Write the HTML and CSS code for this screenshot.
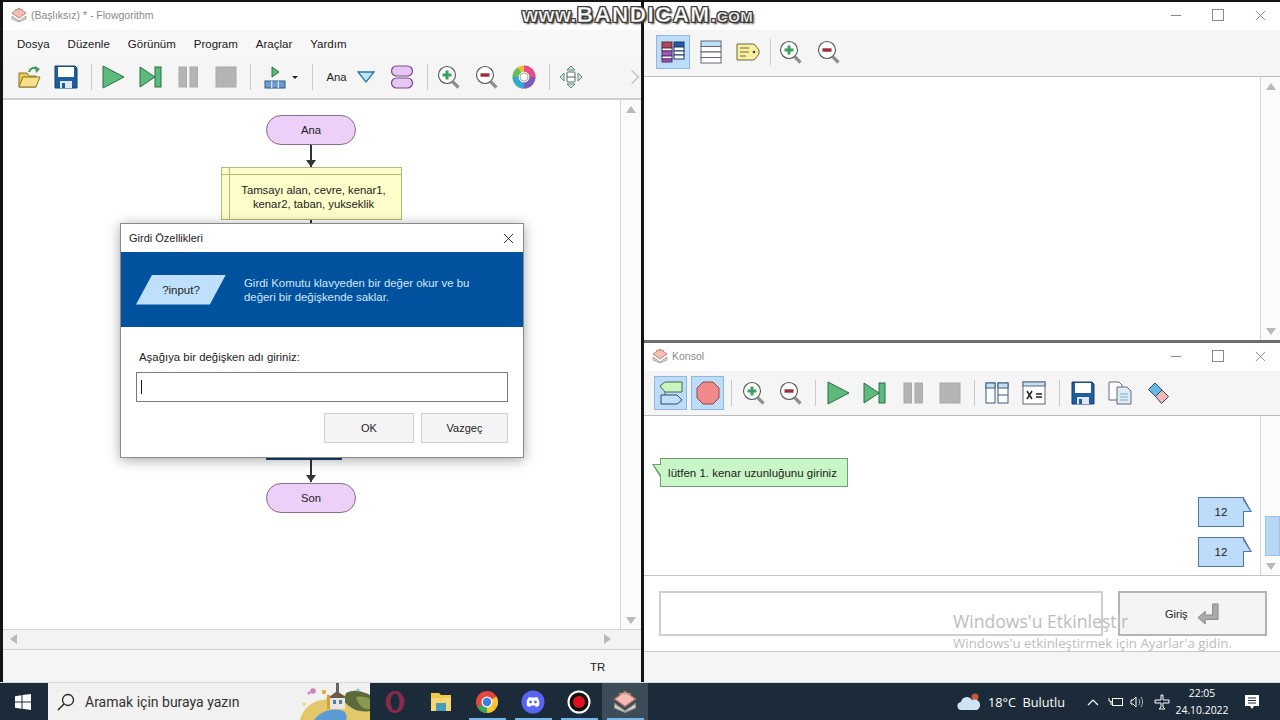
FILE: index.html
```html
<!DOCTYPE html>
<html lang="tr">
<head>
<meta charset="utf-8">
<title>Flowgorithm</title>
<link rel="stylesheet" href="styles.css">
</head>
<body>
<svg class="defs" width="0" height="0">
  <defs>
    <symbol id="logo" viewBox="0 0 16 16"><path d="M8 1l7 5-7 5-7-5z" fill="#f5bdb5" stroke="#b87068" stroke-width=".8"/><path d="M1 9l7 5 7-5v3l-7 3-7-3z" fill="#ddd6c8" stroke="#94948a" stroke-width=".7"/><path d="M4 2.500h8" stroke="#c8a080" stroke-width=".8"/></symbol>
    <symbol id="open" viewBox="0 0 24 24"><path d="M2 8h8l2 3h7v11H2z" fill="#e8c75a" stroke="#8a7320"/><path d="M2 22l4-10h17l-4 10z" fill="#f6e08a" stroke="#8a7320"/><path d="M12 7c1-4 5-5 8-3" fill="none" stroke="#4a9a60" stroke-width="2.200"/><path d="M18 1l5 3-4 4z" fill="#4a9a60"/></symbol>
    <symbol id="save" viewBox="0 0 24 24"><path d="M1 1h20l2 2v20H1z" fill="#1d5f9e" stroke="#123f6e"/><rect x="4" y="2" width="16" height="10" fill="#fff"/><rect x="6" y="16" width="12" height="7" fill="#dfe8f2"/><rect x="8" y="18" width="3" height="5" fill="#1d5f9e"/></symbol>
    <symbol id="play" viewBox="0 0 24 24"><path d="M2 1l21 11L2 23z" fill="#5dba7d" stroke="#2c6e47"/></symbol>
    <symbol id="step" viewBox="0 0 24 24"><path d="M1 2l15 10L1 22z" fill="#5dba7d" stroke="#2c6e47"/><rect x="16" y="2" width="6" height="20" fill="#5dba7d" stroke="#2c6e47"/></symbol>
    <symbol id="pause" viewBox="0 0 24 24"><rect x="3" y="2" width="7.500" height="20" fill="#b4b4b4" stroke="#aaa"/><rect x="14" y="2" width="7.500" height="20" fill="#b4b4b4" stroke="#aaa"/></symbol>
    <symbol id="stop" viewBox="0 0 24 24"><rect x="2" y="2" width="20" height="20" fill="#b4b4b4" stroke="#aaa"/></symbol>
    <symbol id="flow" viewBox="0 0 24 24"><path d="M9 2l7 5-7 5z" fill="#5dba7d" stroke="#2c6e47"/><rect x="2" y="16" width="20" height="7" fill="#6a9cd0" stroke="#2a5a8a"/><path d="M8.700 16v7M15.300 16v7" stroke="#cfe3f5" stroke-width="1.300"/></symbol>
    <symbol id="down" viewBox="0 0 18 12"><path d="M1 1h16l-8 10z" fill="#bfe3f5" stroke="#2a7a9a" stroke-width="1.300"/></symbol>
    <symbol id="stack" viewBox="0 0 24 24"><rect x="1.500" y="1" width="21" height="10" rx="5" fill="#e6c6f2" stroke="#7a4a8a" stroke-width="1.200"/><rect x="1.500" y="13" width="21" height="10" rx="5" fill="#e6c6f2" stroke="#7a4a8a" stroke-width="1.200"/></symbol>
    <symbol id="zin" viewBox="0 0 24 24"><circle cx="10" cy="10" r="8.500" fill="#fff" stroke="#4a5a50" stroke-width="1.100"/><path d="M15.500 16.500l6 6" stroke="#8f8f8f" stroke-width="3.200"/><path d="M10 5.500v9M5.500 10h9" stroke="#3aa060" stroke-width="3"/></symbol>
    <symbol id="zout" viewBox="0 0 24 24"><circle cx="10" cy="10" r="8.500" fill="#fff" stroke="#4a5a50" stroke-width="1.100"/><path d="M15.500 16.500l6 6" stroke="#8f8f8f" stroke-width="3.200"/><path d="M5.500 10h9" stroke="#a02a3a" stroke-width="3.400"/></symbol>
    <symbol id="color" viewBox="0 0 24 24"><circle cx="12" cy="12" r="8.500" fill="none" stroke="#e8c030" stroke-width="6"/><path d="M12 3.500a8.500 8.500 0 0 1 8.500 8.500" fill="none" stroke="#e84a8a" stroke-width="6"/><path d="M20.500 12a8.500 8.500 0 0 1-8.500 8.500" fill="none" stroke="#7a5ac0" stroke-width="6"/><path d="M12 20.500a8.500 8.500 0 0 1-8.500-8.500" fill="none" stroke="#30a8d8" stroke-width="6"/><path d="M3.500 12a8.500 8.500 0 0 1 4-7" fill="none" stroke="#60c060" stroke-width="6"/><circle cx="12" cy="12" r="4" fill="#fff" stroke="#777" stroke-width=".6"/></symbol>
    <symbol id="move" viewBox="0 0 24 24"><rect x="8" y="7" width="8" height="10" rx="1" fill="#fff" stroke="#4a6a62" stroke-width="1"/><path d="M8 12h8" stroke="#4a6a62"/><path d="M12 1l4 4H8zM12 23l4-4H8zM1 12l4-4v8zM23 12l-4-4v8z" fill="#cdeede" stroke="#4a6a62" stroke-width=".8"/></symbol>
    <symbol id="split" viewBox="0 0 24 24"><rect x="1" y="2" width="10" height="6" fill="#a84a5a" stroke="#6a2a3a"/><rect x="1" y="8" width="10" height="3" fill="#fff" stroke="#6a2a3a"/><rect x="1" y="11" width="10" height="5" fill="#9a5ab0" stroke="#5a2a6a"/><rect x="1" y="16" width="10" height="3" fill="#fff" stroke="#5a2a6a"/><rect x="1" y="19" width="10" height="3" fill="#9a5ab0" stroke="#5a2a6a"/><rect x="13" y="2" width="10" height="5" fill="#2a5a9a" stroke="#1a3a6a"/><rect x="13" y="7" width="10" height="4" fill="#fff" stroke="#1a3a6a"/><rect x="13" y="11" width="10" height="4" fill="#fff" stroke="#1a3a6a"/><rect x="13" y="15" width="10" height="4" fill="#fff" stroke="#1a3a6a"/></symbol>
    <symbol id="rows" viewBox="0 0 24 24"><rect x="2" y="1" width="20" height="5.500" fill="#bfe0f5" stroke="#667"/><rect x="2" y="6.500" width="20" height="5.500" fill="#fff" stroke="#667"/><rect x="2" y="12" width="20" height="5.500" fill="#fff" stroke="#667"/><rect x="2" y="17.500" width="20" height="5.500" fill="#fff" stroke="#667"/></symbol>
    <symbol id="tag" viewBox="0 0 24 24"><path d="M1 4h16q1 0 2 1l4 5v4l-4 5q-1 1-2 1H1z" fill="#f8f0a0" stroke="#6a6a40"/><path d="M4 8h9M4 12h9M4 16h6" stroke="#6a6a40"/><circle cx="18" cy="12" r="1.300" fill="#444"/></symbol>
    <symbol id="chat" viewBox="0 0 24 24"><path d="M6 1h17v10H6L1 5z" fill="#c8f5c0" stroke="#3a6a4a"/><path d="M2 14h16l5 5-5 4H2z" fill="#bfe0f5" stroke="#2a4a6a"/><path d="M6 11v3" stroke="#3a6a4a"/></symbol>
    <symbol id="octa" viewBox="0 0 24 24"><path d="M7 1h10l6 6v10l-6 6H7l-6-6V7z" fill="#f08a8a" stroke="#8a4a4a"/></symbol>
    <symbol id="panes" viewBox="0 0 24 24"><rect x="1" y="2" width="9" height="20" fill="#fff" stroke="#3a5a7a"/><rect x="1" y="2" width="9" height="5" fill="#bfe0f5" stroke="#3a5a7a"/><rect x="13" y="2" width="10" height="20" fill="#fff" stroke="#3a5a7a"/><rect x="13" y="2" width="10" height="5" fill="#bfe0f5" stroke="#3a5a7a"/><path d="M13 14h10" stroke="#3a5a7a"/></symbol>
    <symbol id="vars" viewBox="0 0 24 24"><rect x="1" y="1" width="22" height="22" fill="#fff" stroke="#667"/><rect x="1" y="1" width="22" height="4" fill="#bfe0f5" stroke="#667"/><path d="M5 10l5 8M10 10l-5 8" stroke="#222" stroke-width="1.500"/><path d="M14 13h6M14 16h6" stroke="#222" stroke-width="1.500"/></symbol>
    <symbol id="copy" viewBox="0 0 24 24"><path d="M1 1h10l3 3v15H1z" fill="#fff" stroke="#667"/><path d="M9 6h10l4 4v13H9z" fill="#dcebf8" stroke="#667"/><path d="M12 13h8M12 16h8M12 19h8" stroke="#8ab"/></symbol>
    <symbol id="eraser" viewBox="0 0 24 24"><path d="M9 2l7 7-6.500 6.500-7-7z" fill="#6ab8e8" stroke="#2a4a5a"/><path d="M16 9l6.500 6.500-7 7-6-7z" fill="#f4b8b8" stroke="#2a4a5a"/></symbol>
    <symbol id="enter" viewBox="0 0 24 24"><path d="M17 1h6v17H9v5L1 16l8-7v4h8z" fill="#aaa" stroke="#888"/></symbol>
    <symbol id="x" viewBox="0 0 12 12"><path d="M1 1l10 10M11 1L1 11" fill="none" stroke="currentColor"/></symbol>
  </defs>
</svg>

<div class="desktop">
  <section class="window win-main">
    <header class="titlebar"><svg class="logo"><use href="#logo"/></svg><span class="title-text">(Başlıksız) * - Flowgorithm</span></header>
    <nav class="menu"><span>Dosya</span><span>Düzenle</span><span>Görünüm</span><span>Program</span><span>Araçlar</span><span>Yardım</span></nav>
    <div class="toolbar tb-main">
      <span class="btn"><svg class="ic"><use href="#open"/></svg></span>
      <span class="btn"><svg class="ic"><use href="#save"/></svg></span>
      <i class="sep s1"></i>
      <span class="btn"><svg class="ic"><use href="#play"/></svg></span>
      <span class="btn"><svg class="ic"><use href="#step"/></svg></span>
      <span class="btn"><svg class="ic"><use href="#pause"/></svg></span>
      <span class="btn"><svg class="ic"><use href="#stop"/></svg></span>
      <i class="sep s1"></i>
      <span class="btn flow-btn"><svg class="ic"><use href="#flow"/></svg><b class="caret"></b></span>
      <i class="sep s2"></i>
      <span class="ana">Ana</span>
      <svg class="tri"><use href="#down"/></svg>
      <span class="btn"><svg class="ic"><use href="#stack"/></svg></span>
      <i class="sep s1"></i>
      <span class="btn"><svg class="ic"><use href="#zin"/></svg></span>
      <span class="btn"><svg class="ic"><use href="#zout"/></svg></span>
      <span class="btn"><svg class="ic"><use href="#color"/></svg></span>
      <i class="sep s1"></i>
      <span class="btn"><svg class="ic"><use href="#move"/></svg></span>
      <span class="chev"></span>
    </div>
    <div class="canvas-row">
      <div class="canvas">
        <div class="node oval n-ana">Ana</div>
        <div class="wire w1"></div>
        <div class="node decl"><span>Tamsayı alan, cevre, kenar1,<br>kenar2, taban, yukseklik</span></div>
        <div class="wire w2"></div>
        <div class="under-bar"></div>
        <div class="wire w3"></div>
        <div class="node oval n-son">Son</div>
      </div>
      <div class="vscroll"><i class="up"></i><i class="dn"></i></div>
    </div>
    <div class="hscroll"><i class="lf"></i><i class="rt"></i></div>
    <footer class="status main-status"><span class="lang">TR</span></footer>
  </section>

  <div class="right-col">
    <section class="window win-vars">
      <header class="titlebar wc-bar"><span class="wc"><i class="min"></i><i class="max"></i><i class="cls"><svg class="x-ic"><use href="#x"/></svg></i></span></header>
      <div class="toolbar tb-vars">
        <span class="btn on"><svg class="ic"><use href="#split"/></svg></span>
        <span class="btn"><svg class="ic"><use href="#rows"/></svg></span>
        <span class="btn"><svg class="ic"><use href="#tag"/></svg></span>
        <i class="sep s3"></i>
        <span class="btn"><svg class="ic"><use href="#zin"/></svg></span>
        <span class="btn"><svg class="ic"><use href="#zout"/></svg></span>
      </div>
      <div class="pane">
        <div class="pane-body"></div>
        <div class="vscroll"><i class="up"></i><i class="dn"></i></div>
      </div>
    </section>

    <section class="window win-console">
      <header class="titlebar"><svg class="logo"><use href="#logo"/></svg><span class="title-text">Konsol</span><span class="wc"><i class="min"></i><i class="max"></i><i class="cls"><svg class="x-ic"><use href="#x"/></svg></i></span></header>
      <div class="toolbar tb-console">
        <span class="btn on"><svg class="ic"><use href="#chat"/></svg></span>
        <span class="btn on"><svg class="ic"><use href="#octa"/></svg></span>
        <i class="sep s3"></i>
        <span class="btn"><svg class="ic"><use href="#zin"/></svg></span>
        <span class="btn"><svg class="ic"><use href="#zout"/></svg></span>
        <i class="sep s3"></i>
        <span class="btn"><svg class="ic"><use href="#play"/></svg></span>
        <span class="btn"><svg class="ic"><use href="#step"/></svg></span>
        <span class="btn"><svg class="ic"><use href="#pause"/></svg></span>
        <span class="btn"><svg class="ic"><use href="#stop"/></svg></span>
        <i class="sep s3"></i>
        <span class="btn"><svg class="ic"><use href="#panes"/></svg></span>
        <span class="btn"><svg class="ic"><use href="#vars"/></svg></span>
        <i class="sep s4"></i>
        <span class="btn"><svg class="ic"><use href="#save"/></svg></span>
        <span class="btn"><svg class="ic"><use href="#copy"/></svg></span>
        <span class="btn"><svg class="ic"><use href="#eraser"/></svg></span>
      </div>
      <div class="pane console-pane">
        <div class="pane-body chat">
          <div class="bubble out">lütfen 1. kenar uzunluğunu giriniz</div>
          <div class="bubble in">12</div>
          <div class="bubble in">12</div>
        </div>
        <div class="vscroll"><i class="thumb"></i><i class="dn"></i></div>
      </div>
      <div class="entry">
        <div class="entry-field"></div>
        <div class="entry-btn"><span>Giriş</span><svg class="enter"><use href="#enter"/></svg></div>
      </div>
      <footer class="status con-status"></footer>
    </section>
  </div>
</div>

<div class="dialog">
  <header class="dlg-title"><span>Girdi Özellikleri</span><svg class="dlg-x"><use href="#x"/></svg></header>
  <div class="dlg-banner">
    <div class="para">?input?</div>
    <p>Girdi Komutu klavyeden bir değer okur ve bu<br>değeri bir değişkende saklar.</p>
  </div>
  <div class="dlg-body">
    <label>Aşağıya bir değişken adı giriniz:</label>
    <div class="dlg-input"><i class="cursor"></i></div>
    <div class="dlg-actions"><span class="dbtn ok">OK</span><span class="dbtn cancel">Vazgeç</span></div>
  </div>
</div>

<div class="bandicam"><span class="bc-www">www.</span><span class="bc-main">BANDICAM</span><span class="bc-com">.com</span></div>
<div class="activate"><div class="a1">Windows'u Etkinleştir</div><div class="a2">Windows'u etkinleştirmek için Ayarlar'a gidin.</div></div>

<footer class="taskbar">
  <span class="start"><svg width="16" height="16" viewBox="0 0 16 16"><path d="M0 2.200l6.500-1v6.300H0zM7.500 1l8.500-1v7.500H7.500zM0 8.500h6.500v6.300l-6.500-1zM7.500 8.500H16V16l-8.500-1.200z" fill="#fff"/></svg></span>
  <div class="search">
    <svg class="mag" width="18" height="18" viewBox="0 0 18 18"><circle cx="11" cy="7" r="5.500" fill="none" stroke="#222" stroke-width="1.300"/><path d="M7 11l-6 6" stroke="#222" stroke-width="1.500"/></svg>
    <span>Aramak için buraya yazın</span>
    <svg class="scene" width="70" height="37" viewBox="0 0 70 37"><path d="M0 37c2-10 12-20 24-20 8-6 24-8 46 0v20z" fill="#e3c869"/><path d="M14 37c6-8 16-12 26-10 6 1 8 6 6 10z" fill="#5b9bd5"/><path d="M46 10c8-4 16-2 24 2v16c-10 2-20-2-26-10z" fill="#5d6b3a"/><path d="M56 14c5-1 10 0 14 2v10c-5 1-12-3-14-12z" fill="#8a9a50"/><rect x="30" y="14" width="15" height="12" fill="#e6e6e6"/><rect x="33" y="17" width="3" height="4" fill="#5a7a9a"/><rect x="39" y="17" width="3" height="4" fill="#5a7a9a"/><path d="M28 15l9-7 10 7z" fill="#6a5a4a"/><path d="M36 0h3v9h-3z" fill="#666"/><path d="M27 12h3v14h-3z" fill="#d8a030"/><circle cx="13" cy="8" r="2.800" fill="#d080c0"/><circle cx="9" cy="10" r="1.500" fill="#d080c0"/><circle cx="24" cy="9" r="2.200" fill="#d8b040"/><circle cx="58" cy="7" r="1.500" fill="#7ac0d8"/><circle cx="4" cy="21" r="1.500" fill="#e8d050"/></svg>
  </div>
  <div class="apps">
    <span class="app"><svg width="22" height="24" viewBox="0 0 22 24"><ellipse cx="11" cy="12" rx="9.500" ry="11" fill="#8a2a4a"/><ellipse cx="11" cy="12" rx="4.500" ry="8.500" fill="#1c2b39"/></svg></span>
    <span class="app"><svg width="20" height="20" viewBox="0 0 20 20"><path d="M0 1h8l2 2h10v16H0z" fill="#f2c84b"/><rect x="0" y="6" width="20" height="13" fill="#f6d873"/><rect x="5" y="11" width="10" height="8" fill="#4a9ab8"/></svg></span>
    <span class="app ul"><svg width="24" height="24" viewBox="0 0 24 24"><circle cx="12" cy="12" r="11" fill="#e2483d"/><path d="M12 12L2.500 17.500A11 11 0 0 0 12 23z" fill="#3aa757"/><path d="M12 12l9.500 5.500A11 11 0 0 1 12 23z" fill="#f7c631"/><path d="M12 12L21.500 6.500A11 11 0 0 1 21.500 17.500z" fill="#f7c631"/><circle cx="12" cy="12" r="5.500" fill="#fff"/><circle cx="12" cy="12" r="4.200" fill="#3b7de0"/></svg></span>
    <span class="app ul"><svg width="24" height="24" viewBox="0 0 24 24"><circle cx="12" cy="12" r="11.500" fill="#5865f2"/><path d="M6 16c-1-4 0-7 2-9l2 .5h4l2-.5c2 2 3 5 2 9l-3 1-1-1.500h-4L9 17z" fill="#fff"/><circle cx="9.500" cy="12" r="1.400" fill="#5865f2"/><circle cx="14.500" cy="12" r="1.400" fill="#5865f2"/></svg></span>
    <span class="app ul"><svg width="24" height="24" viewBox="0 0 24 24"><circle cx="12" cy="12" r="10.500" fill="#111" stroke="#fff" stroke-width="2"/><circle cx="12" cy="12" r="6" fill="#e01020"/></svg></span>
    <span class="app active ul"><svg class="task-logo"><use href="#logo"/></svg></span>
  </div>
  <div class="tray">
    <svg class="cloud" width="24" height="20" viewBox="0 0 24 20"><circle cx="18" cy="5" r="3.500" fill="#c8583a"/><path d="M5 18a4 4 0 0 1-1-8 6 6 0 0 1 11-2 5 5 0 0 1 5 10z" fill="#cfe3f5"/></svg>
    <span class="weather">18°C&nbsp; Bulutlu</span>
    <svg class="caret-up" width="12" height="8" viewBox="0 0 12 8"><path d="M1 7l5-5 5 5" fill="none" stroke="#fff" stroke-width="1.200"/></svg>
    <svg class="t-batt" width="16" height="14" viewBox="0 0 16 14"><rect x="4.500" y="3.500" width="10" height="7" fill="none" stroke="#fff"/><path d="M1 3v3l3 1M3 7v3" stroke="#fff" fill="none"/></svg>
    <svg class="t-vol" width="16" height="14" viewBox="0 0 16 14"><path d="M1 5h2l3-3v10l-3-3H1z" fill="none" stroke="#fff"/><path d="M9 4c1 2 1 4 0 6M11 2c2 3 2 7 0 10" fill="none" stroke="#bbb"/></svg>
    <svg class="t-plane" width="16" height="16" viewBox="0 0 16 16"><path d="M7 1h2v5h6v3H9v4l2 2H5l2-2V9H1V6h6z" fill="none" stroke="#fff"/></svg>
    <span class="clock"><span>22:05</span><span>24.10.2022</span></span>
    <svg class="notif" width="16" height="16" viewBox="0 0 16 16"><path d="M1 1h14v11h-5l-2 3-2-3H1z" fill="#fff"/><path d="M4 4h8M4 6.500h8M4 9h8" stroke="#1c2b39"/></svg>
  </div>
</footer>
</body>
</html>
```

FILE: styles.css
```css
* { box-sizing: border-box; }
html, body { margin: 0; padding: 0; width: 1280px; height: 720px; overflow: hidden; }
body { background: #0b0b0b; font-family: "Liberation Sans", Arial, sans-serif; color: #222; position: relative; }
.defs { position: absolute; }
i { font-style: normal; display: block; }

.desktop { display: flex; gap: 3px; height: 682px; padding: 2px 0 0 3px; background: #141414; }
.window { background: #fff; display: flex; flex-direction: column; min-height: 0; }
.win-main { width: 638px; }
.win-main .vscroll { width: 21px; }
.right-col { width: 636px; display: flex; flex-direction: column; gap: 3px; background: #6e6e6e; }
.win-vars { height: 338px; }
.win-console { flex: 1; }

.titlebar { height: 28px; display: flex; align-items: center; padding: 0 0 2px 8px; background: #fff; flex: none; }
.logo { width: 16px; height: 16px; margin-right: 4px; }
.title-text { font-size: 10.5px; color: #8a8a8a; }
.wc { margin-left: auto; margin-right: -1px; display: flex; align-items: center; height: 100%; }
.wc i { width: 42px; display: flex; align-items: center; justify-content: center; color: #8a8a8a; }
.min::before { content: ""; width: 10px; height: 1px; background: #8a8a8a; }
.max::before { content: ""; width: 10px; height: 10px; border: 1px solid #8a8a8a; }
.x-ic { width: 11px; height: 11px; }

.menu { height: 28px; display: flex; align-items: center; gap: 18px; padding-left: 14px; font-size: 11.5px; background: #f7f7f7; flex: none; color: #1a1a1a; }

.toolbar { display: flex; align-items: center; background: #f5f5f5; flex: none; }
.tb-main { height: 40px; padding: 0 0 2px 7px; }
.btn { width: 37.5px; height: 34px; display: flex; align-items: center; justify-content: center; flex: none; }
.btn.on { width: 34px; margin-right: 3px; background: #bcdcf7; border: 1px solid #8fb8dc; }
.ic { width: 24px; height: 24px; }
.sep { width: 1px; height: 26px; background: #c8c8c8; flex: none; }
.s1 { margin: 0 3px 0 5.500px; }
.s2 { margin: 0 14px 0 15.500px; }
.s3 { margin: 0 3px 0 5px; }
.s4 { margin: 0 4px 0 6px; }
.flow-btn { width: 42px; position: relative; }
.caret { position: absolute; right: -2px; top: 16px; border: 3px solid transparent; border-top: 3px solid #222; }
.ana { width: 20px; font-size: 11.3px; text-align: center; }
.tri { width: 18px; height: 12px; margin: 0 9px 0 10px; }
.chev { margin-left: auto; margin-right: 4px; width: 10px; height: 10px; border-top: 1.5px solid #b5b5b5; border-right: 1.5px solid #b5b5b5; transform: rotate(45deg); }

.canvas-row { flex: 1; display: flex; min-height: 0; border-top: 2px solid #cfcfcf; }
.canvas { flex: 1; position: relative; background: #fff; }
.node { position: absolute; font-size: 11.3px; display: flex; align-items: center; justify-content: center; text-align: center; }
.oval { left: 263px; width: 90px; height: 30px; border-radius: 15px; background: #ecd0f7; border: 1px solid #8b6a96; }
.n-ana { top: 15px; }
.n-son { top: 383px; }
.wire { position: absolute; left: 307px; width: 2px; background: #333; }
.wire::after { content: ""; position: absolute; left: -4px; bottom: 0; border: 5px solid transparent; border-bottom: 0; border-top: 7px solid #333; }
.w1 { top: 45px; height: 22px; }
.w2 { top: 120px; height: 5px; }
.w2::after { display: none; }
.w3 { top: 359px; height: 23px; }
.under-bar { position: absolute; left: 263px; top: 358px; width: 76px; height: 2px; background: #14456f; }
.decl { left: 218px; top: 67px; width: 181px; height: 53px; background: #fdfdc9; border: 1px solid #b8b87a; padding: 6px 0 0 4px; line-height: 14px; font-size: 11.3px; }
.decl::before { content: ""; position: absolute; left: 7px; top: 0; bottom: 0; width: 1px; background: #b8b87a; }
.decl::after { content: ""; position: absolute; left: 0; right: 0; top: 6px; height: 1px; background: #b8b87a; }

.vscroll { width: 20px; background: #fbfbfb; border-left: 1px solid #d2d2d2; position: relative; flex: none; }
.vscroll .up, .vscroll .dn { position: absolute; left: 5px; border: 5px solid transparent; }
.vscroll .up { top: 6px; border-top: 0; border-bottom: 7px solid #b9b9b9; }
.vscroll .dn { bottom: 5px; border-bottom: 0; border-top: 7px solid #b9b9b9; }
.thumb { position: absolute; left: 4px; right: 0; top: 100px; height: 40px; background: #b6d8f6; border: 1px solid #9cc4e6; }

.hscroll { height: 21px; background: #f3f3f3; border-top: 1px solid #d2d2d2; border-bottom: 1px solid #d2d2d2; position: relative; flex: none; }
.hscroll .lf, .hscroll .rt { position: absolute; top: 4px; border: 5px solid transparent; }
.hscroll .lf { left: 7px; border-left: 0; border-right: 7px solid #b9b9b9; }
.hscroll .rt { left: 601px; border-right: 0; border-left: 7px solid #b9b9b9; }
.status { background: #f5f5f5; display: flex; align-items: center; font-size: 11.5px; }
.main-status { flex: 0 0 32px; }
.lang { margin-left: 587px; margin-top: 1px; }

.wc-bar { padding-left: 0; }
.tb-vars { height: 46px; padding: 0 0 2px 12px; }
.tb-vars .btn:nth-child(2) { width: 35px; }
.tb-vars .btn:nth-child(3) { margin-left: 1px; }
.tb-vars .sep { margin: 0 2px 0 3px; }
.pane { flex: 1; display: flex; min-height: 0; border-top: 1px solid #bcbcbc; }
.pane-body { flex: 1; background: #fff; }

.tb-console { height: 44px; padding: 0 0 1px 10px; }
.tb-console .btn.on { width: 33px; margin-right: 4px; }
.tb-console .btn.on + .sep { margin-left: 3px; }
.console-pane { flex: 0 0 160px; }
.chat { display: flex; flex-direction: column; padding: 42px 16px 0 16px; overflow: hidden; align-items: flex-end; }
.bubble { position: relative; font-size: 11.5px; display: flex; align-items: center; justify-content: center; border: 1px solid; }
.bubble.out { align-self: flex-start; width: 188px; height: 29px; padding-right: 3px; background: #c9f6c6; border-color: #6ea070; }
.bubble.in { width: 46px; height: 30px; background: #bcdcfa; border-color: #4e7aa0; margin-bottom: 10px; margin-top: 10px; }
.bubble.in + .bubble.in { margin-top: 0; margin-bottom: 0; }
.bubble::before, .bubble::after { content: ""; position: absolute; }
.bubble.out::before { left: -9px; top: 5px; width: 8px; height: 13px; background: #6ea070; clip-path: polygon(0 0, 100% 0, 100% 100%); }
.bubble.out::after { left: -7px; top: 6px; width: 7px; height: 10px; background: #c9f6c6; clip-path: polygon(0 0, 100% 0, 100% 100%); }
.bubble.in::before { right: -9px; top: 0; width: 8px; height: 14px; background: #4e7aa0; clip-path: polygon(0 0, 100% 100%, 0 100%); }
.bubble.in::after { right: -7px; top: 2px; width: 7px; height: 11px; background: #bcdcfa; clip-path: polygon(0 0, 100% 100%, 0 100%); }

.entry { flex: 0 0 76px; display: flex; padding: 15px 13px 0 15px; gap: 15px; border-top: 1px solid #c4c4c4; background: #fff; }
.entry-field { width: 444px; height: 45px; border: 2px solid #cfcfcf; background: #fff; }
.entry-btn { width: 149px; height: 45px; border: 2px solid #b4b4b4; background: #f4f4f4; display: flex; align-items: center; gap: 9px; padding-left: 45px; font-size: 11px; }
.enter { width: 22px; height: 22px; }
.con-status { flex: 1; border-top: 1px solid #c9c9c9; }

.dialog { position: absolute; left: 120px; top: 223px; width: 404px; height: 235px; background: #fff; border: 1px solid #8a8a8a; box-shadow: 0 2px 12px rgba(0,0,0,.35); display: flex; flex-direction: column; }
.dlg-title { height: 28px; display: flex; align-items: center; justify-content: space-between; padding: 0 8px; font-size: 11px; flex: none; }
.dlg-x { width: 11px; height: 11px; color: #222; margin-right: 1px; }
.dlg-banner { height: 75px; background: #00529f; display: flex; align-items: center; padding-left: 15px; flex: none; }
.para { width: 90px; height: 30px; background: #bfe0fb; clip-path: polygon(18% 0, 100% 0, 82% 100%, 0 100%); font-size: 11.5px; display: flex; align-items: center; justify-content: center; color: #222; flex: none; }
.dlg-banner p { margin: 0 0 0 18px; font-size: 11.4px; line-height: 14px; color: #d4e6f7; }
.dlg-body { flex: 1; padding: 24px 15px 0; display: flex; flex-direction: column; }
.dlg-body label { font-size: 11.4px; line-height: 13px; padding-left: 3px; }
.dlg-input { height: 30px; margin-top: 8px; border: 1px solid #7a7a7a; display: flex; align-items: center; padding-left: 4px; flex: none; }
.cursor { width: 1px; height: 14px; background: #111; }
.dlg-actions { display: flex; justify-content: flex-end; gap: 7px; margin-top: 11px; }
.dbtn { height: 30px; background: #f4f4f4; border: 1px solid #cfcfcf; display: flex; align-items: center; justify-content: center; font-size: 11px; }
.ok { width: 90px; }
.cancel { width: 87px; }

.bandicam { position: absolute; left: 522px; top: 2px; display: flex; align-items: baseline; line-height: 26px; font-weight: 700; color: #fff; -webkit-text-stroke: .4px #555; text-shadow: 1px 1px 0 #333, -1px -1px 0 #333, 1px -1px 0 #333, -1px 1px 0 #333, 2px 2px 2px #333; white-space: nowrap; }
.bc-www { font-size: 20.5px; letter-spacing: .5px; }
.bc-main { font-size: 22.5px; letter-spacing: 1.4px; }
.bc-com { font-size: 21px; font-variant: small-caps; letter-spacing: .5px; }

.activate { position: absolute; left: 953px; top: 609px; color: #bdbdbd; font-family: "Open Sans", sans-serif; white-space: nowrap; }
.a1 { font-size: 17.6px; line-height: 24px; }
.a2 { font-size: 13.3px; line-height: 18px; margin-top: 1px; }

.taskbar { height: 38px; background: #1c2b39; border-top: 1px solid #d9d9d9; display: flex; align-items: stretch; color: #fff; }
.start { width: 48px; display: flex; align-items: center; justify-content: center; padding-right: 2px; }
.search { width: 322px; background: #f1f1f1; display: flex; align-items: center; position: relative; color: #333; font-size: 14px; font-family: Roboto, sans-serif; padding-left: 9px; }
.mag { margin-right: 10px; }
.scene { position: absolute; right: 0; bottom: 0; }
.apps { display: flex; padding-left: 2px; flex: none; }
.app { width: 46px; display: flex; align-items: center; justify-content: center; position: relative; }
.app.ul::after { content: ""; position: absolute; left: 4.500px; right: 4.500px; bottom: 0; height: 2px; background: #75b7e8; }
.active { background: #3c4c58; }
.task-logo { width: 24px; height: 24px; }
.tray { margin-left: auto; display: flex; align-items: center; position: relative; width: 323px; }
.cloud { margin-right: 7px; }
.weather { font-size: 12.7px; font-family: "Open Sans", sans-serif; width: 99px; white-space: nowrap; }
.caret-up { margin-right: 9px; }
.t-batt { margin-right: 6px; }
.t-vol { margin-right: 8px; }
.t-plane { margin-right: 6px; }
.clock { display: flex; flex-direction: column; align-items: center; font-size: 10.4px; line-height: 17px; font-family: "Open Sans", sans-serif; width: 52px; }
.notif { margin-left: 16px; }
```
